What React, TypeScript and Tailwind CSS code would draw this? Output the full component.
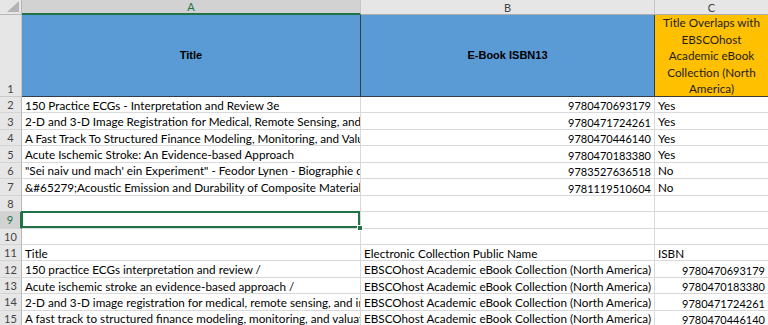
import React from "react";

type Row = { n: number; a?: string; b?: string; c?: string; bRight?: boolean; cRight?: boolean };

const rows: Row[] = [
  { n: 2, a: "150 Practice ECGs - Interpretation and Review 3e", b: "9780470693179", c: "Yes", bRight: true },
  { n: 3, a: "2-D and 3-D Image Registration for Medical, Remote Sensing, and Planetary Applications", b: "9780471724261", c: "Yes", bRight: true },
  { n: 4, a: "A Fast Track To Structured Finance Modeling, Monitoring, and Valuation: Jump Start VBA", b: "9780470446140", c: "Yes", bRight: true },
  { n: 5, a: "Acute Ischemic Stroke: An Evidence-based Approach", b: "9780470183380", c: "Yes", bRight: true },
  { n: 6, a: "\"Sei naiv und mach' ein Experiment\" - Feodor Lynen - Biographie des Münchner Biochemikers", b: "9783527636518", c: "No", bRight: true },
  { n: 7, a: "&#65279;Acoustic Emission and Durability of Composite Materials", b: "9781119510604", c: "No", bRight: true },
  { n: 8 },
  { n: 9 },
  { n: 10 },
  { n: 11, a: "Title", b: "Electronic Collection Public Name", c: "ISBN" },
  { n: 12, a: "150 practice ECGs interpretation and review /", b: "EBSCOhost Academic eBook Collection (North America)", c: "9780470693179", cRight: true },
  { n: 13, a: "Acute ischemic stroke an evidence-based approach /", b: "EBSCOhost Academic eBook Collection (North America)", c: "9780470183380", cRight: true },
  { n: 14, a: "2-D and 3-D image registration for medical, remote sensing, and interplanetary applications /", b: "EBSCOhost Academic eBook Collection (North America)", c: "9780471724261", cRight: true },
  { n: 15, a: "A fast track to structured finance modeling, monitoring, and valuation jump start VBA /", b: "EBSCOhost Academic eBook Collection (North America)", c: "9780470446140", cRight: true },
];

const cellBase =
  "relative flex h-full shrink-0 items-end overflow-hidden whitespace-nowrap border-r border-b border-[#d9d9d9] px-[3px] pb-[1px]";

export default function App() {
  return (
    <div className="relative h-[325px] w-[768px] overflow-hidden bg-white font-['Lato','Noto_Sans',sans-serif] text-[11.7px] leading-none text-black">
      {/* column headers */}
      <div className="flex h-[15px] text-[11px] text-[#444]">
        <div className="relative h-full w-[22px] shrink-0 border-r border-b border-[#b8b8b8] bg-[#e6e6e6]">
          <svg className="absolute right-[2px] bottom-[2px]" width="12" height="11" viewBox="0 0 12 11">
            <polygon points="12,0 12,11 0,11" fill="#b4b4b4" />
          </svg>
        </div>
        <div className="flex h-full w-[339px] shrink-0 items-center justify-center border-r border-[#c6c6c6] border-b-2 border-b-[#217346] bg-[#d2d2d2] text-[#217346]">
          A
        </div>
        <div className="flex h-full w-[294px] shrink-0 items-center justify-center border-r border-b border-[#c6c6c6] border-b-[#ababab] bg-[#e6e6e6]">
          B
        </div>
        <div className="flex h-full w-[114px] shrink-0 items-center justify-center border-r border-b border-[#c6c6c6] border-b-[#ababab] bg-[#e6e6e6]">
          C
        </div>
      </div>

      {/* row 1 */}
      <div className="flex h-[82px]">
        <div className="flex h-full w-[22px] shrink-0 items-end justify-center border-r border-b border-[#c9c9c9] bg-[#e6e6e6] pb-[2px] text-[11px] text-[#444]">
          1
        </div>
        <div className="flex h-full w-[339px] shrink-0 items-center justify-center border-r border-b border-[#2f3f4f] bg-[#5b9bd5] font-['Liberation_Sans',Arial,sans-serif] text-[11px] font-bold">
          Title
        </div>
        <div className="flex h-full w-[294px] shrink-0 items-center justify-center border-r border-b border-[#2f3f4f] bg-[#5b9bd5] font-['Liberation_Sans',Arial,sans-serif] text-[11px] font-bold">
          E-Book ISBN13
        </div>
        <div className="flex h-full w-[114px] shrink-0 items-center justify-center border-r border-b border-[#3f3a2a] bg-[#ffc000] px-[2px] text-center leading-[16.4px] text-[#1e1e1e]">
          Title Overlaps with EBSCOhost Academic eBook Collection (North America)
        </div>
      </div>

      {/* data rows */}
      {rows.map((r) => {
        const sel = r.n === 9;
        return (
          <div key={r.n} className="flex h-[16.45px]">
            <div
              className={`flex h-full w-[22px] shrink-0 items-center justify-center border-b border-[#d4d4d4] text-[11px] ${
                sel
                  ? "border-r-2 border-r-[#217346] bg-[#d2d2d2] text-[#217346]"
                  : "border-r border-r-[#b8b8b8] bg-[#e6e6e6] text-[#444]"
              }`}
            >
              {r.n}
            </div>
            <div className={`${cellBase} w-[339px] justify-start ${sel ? "overflow-visible" : ""}`}>
              {r.a}
              {sel && (
                <>
                  <div className="pointer-events-none absolute top-[-1px] left-[-1px] right-0 bottom-0 border-2 border-[#217346]" />
                  <div className="absolute right-[-3px] bottom-[-3px] z-10 h-[6px] w-[6px] border border-white bg-[#217346]" />
                </>
              )}
            </div>
            <div className={`${cellBase} w-[294px] ${r.bRight ? "justify-end text-[11px]" : "justify-start"}`}>{r.b}</div>
            <div className={`${cellBase} w-[114px] ${r.cRight ? "justify-end text-[11px]" : "justify-start"}`}>{r.c}</div>
          </div>
        );
      })}
    </div>
  );
}
